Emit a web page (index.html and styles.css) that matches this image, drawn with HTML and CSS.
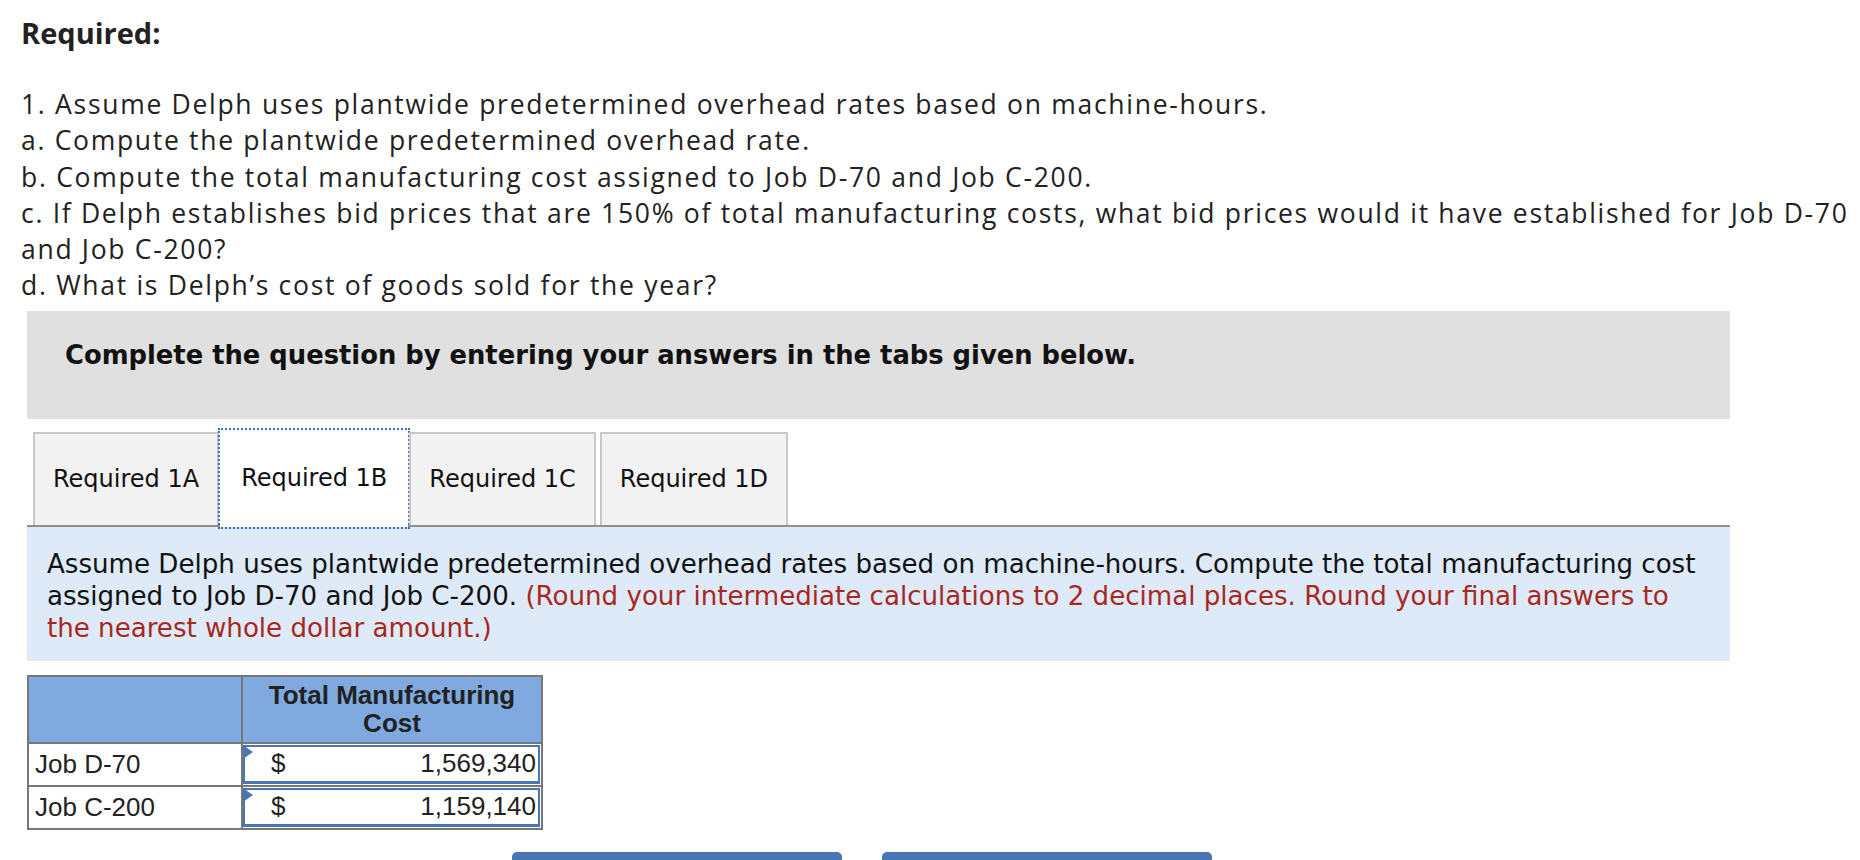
FILE: index.html
```html
<!DOCTYPE html>
<html lang="en">
<head>
    <meta charset="UTF-8">
    <title>Required</title>
    <link rel="stylesheet" href="styles.css">
</head>
<body>
    <div class="page">
        <h2 class="req-title">Required:</h2>
        <div class="req-list">
            <p>1. Assume Delph uses plantwide predetermined overhead rates based on machine-hours.</p>
            <p>a. Compute the plantwide predetermined overhead rate.</p>
            <p>b. Compute the total manufacturing cost assigned to Job D-70 and Job C-200.</p>
            <p>c. If Delph establishes bid prices that are 150% of total manufacturing costs, what bid prices would it have established for Job D-70 and Job C-200?</p>
            <p>d. What is Delph&rsquo;s cost of goods sold for the year?</p>
        </div>

        <div class="instruct-box">Complete the question by entering your answers in the tabs given below.</div>

        <div class="tabs">
            <div class="tab">Required 1A</div>
            <div class="tab active">Required 1B</div>
            <div class="tab">Required 1C</div>
            <div class="tab">Required 1D</div>
        </div>

        <div class="tab-panel">
            <p class="prompt"><span>Assume Delph uses plantwide predetermined overhead rates based on machine-hours. Compute the total manufacturing cost assigned to Job D-70 and Job C-200.</span> <span class="hint">(Round your intermediate calculations to 2 decimal places. Round your final answers to the nearest whole dollar amount.)</span></p>
        </div>

        <table class="answer-table">
            <tr class="head">
                <th class="label-col"></th>
                <th class="value-col">Total Manufacturing<br>Cost</th>
            </tr>
            <tr>
                <td class="label">Job D-70</td>
                <td class="cell"><div class="entry"><span class="flag"></span><span class="cur">$</span><span class="num">1,569,340</span></div></td>
            </tr>
            <tr>
                <td class="label">Job C-200</td>
                <td class="cell"><div class="entry"><span class="flag"></span><span class="cur">$</span><span class="num">1,159,140</span></div></td>
            </tr>
        </table>

        <div class="actions">
            <button class="nav-btn" aria-label="Required 1A"></button>
            <button class="nav-btn" aria-label="Required 1C"></button>
        </div>
    </div>
</body>
</html>
```

FILE: styles.css
```css
body {
    margin: 0;
    background: #fff;
    color: #222;
    font-family: "Open Sans", Arial, sans-serif;
}

.page {
    padding: 15px 10px 0 21px;
}

.req-title {
    margin: 0;
    font-size: 29px;
    line-height: 36px;
    font-weight: bold;
}

.req-list {
    margin-top: 35px;
}

.req-list p {
    margin: 0;
    font-size: 26.5px;
    letter-spacing: 1.7px;
    line-height: 36.3px;
}

.instruct-box {
    margin: 7px 0 0 6px;
    width: 1703px;
    box-sizing: border-box;
    background-color: #e0e0e0;
    padding: 29px 38px 49px;
    font-family: "DejaVu Sans", Verdana, sans-serif;
    font-weight: bold;
    font-size: 25.8px;
    line-height: 30px;
    color: #111;
}

.tabs {
    display: flex;
    align-items: flex-end;
    gap: 4px;
    margin: 11px 0 0 6px;
    width: 1703px;
    padding-left: 6px;
    box-sizing: border-box;
    border-bottom: 2px solid #8f8f8f;
}

.tab {
    height: 93px;
    box-sizing: border-box;
    display: flex;
    align-items: center;
    padding: 0 18px;
    background-color: #f2f2f2;
    border: 2px solid #c8c8c8;
    border-bottom: none;
    font-family: "DejaVu Sans", Verdana, sans-serif;
    font-size: 24px;
    color: #111;
}

.tab.active {
    background-color: #fff;
    height: 97px;
    margin: 0 -3px -2px;
    border: none;
    padding: 0 21px;
    outline: 2px dotted #3d6fb6;
}

.tab-panel {
    margin-left: 6px;
    width: 1703px;
    box-sizing: border-box;
    background-color: #deeaf7;
    padding: 21px 14px 17px 20px;
}

.prompt {
    margin: 0;
    font-family: "DejaVu Sans", Verdana, sans-serif;
    font-size: 26.1px;
    line-height: 32px;
    color: #111;
}

.hint {
    color: #a8281f;
}

.answer-table {
    margin: 14px 0 0 6px;
    border-collapse: collapse;
    border: 2px solid #777;
    font-family: "Liberation Sans", Arial, sans-serif;
    font-size: 26px;
    color: #222;
}

.answer-table th {
    background-color: #80aadf;
    border: 2px solid #777;
    height: 65px;
    padding: 0;
    line-height: 28px;
    font-weight: bold;
}

.label-col {
    width: 212px;
}

.value-col {
    width: 298px;
}

.answer-table td {
    border: 2px solid #777;
    padding: 0;
}

.label {
    padding-left: 6px !important;
    height: 41px;
}

.cell {
    height: 41px;
}

.entry {
    position: relative;
    display: flex;
    justify-content: space-between;
    align-items: center;
    margin: 0 1px 0 0;
    height: 39px;
    box-sizing: border-box;
    border: 2px solid #4a77b4;
    border-bottom-width: 3px;
    padding: 0 2px 0 26px;
    background: #fff;
}

.flag {
    position: absolute;
    left: -2px;
    top: -2px;
    width: 0;
    height: 0;
    border-top: 7px solid transparent;
    border-bottom: 7px solid transparent;
    border-left: 10px solid #4a77b4;
}

.actions {
    display: flex;
    gap: 40px;
    margin: 22px 0 0 491px;
}

.nav-btn {
    width: 330px;
    height: 50px;
    border: none;
    border-radius: 5px;
    background-color: #4a77b4;
}
```
